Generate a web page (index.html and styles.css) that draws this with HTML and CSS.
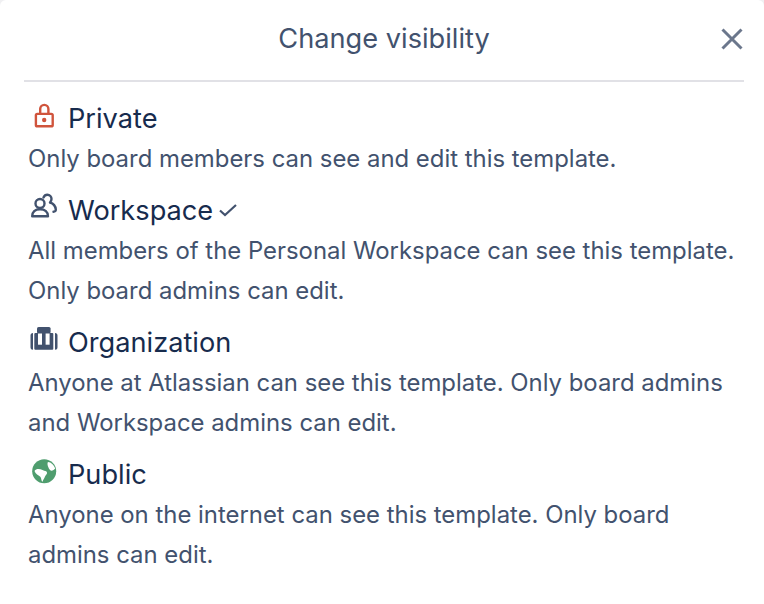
FILE: index.html
```html
<!DOCTYPE html>
<html lang="en">
<head>
<meta charset="utf-8">
<title>Change visibility</title>
<link rel="stylesheet" href="styles.css">
</head>
<body>
<div class="popover">
  <header class="header">
    <h1 class="title">Change visibility</h1>
    <svg class="close" width="24" height="24" viewBox="0 0 24 24"><path d="M2.500 2.500 21.500 21.500M21.500 2.500 2.500 21.500" fill="none" stroke="#6b778c" stroke-width="3"/></svg>
  </header>
  <ul class="options">
    <li class="option">
      <div class="name">
        <svg class="icon" width="30" height="30" viewBox="0 0 30 30"><path d="M12.200 12V8a4.100 4.100 0 0 1 8.200 0V12" fill="none" stroke="#d0543c" stroke-width="2.400"/><rect x="7.900" y="12.900" width="16.800" height="12.400" rx="1.400" fill="none" stroke="#d0543c" stroke-width="2.400"/><circle cx="16.200" cy="19" r="2.200" fill="#d0543c"/></svg>
        <span>Private</span>
      </div>
      <p class="desc">Only board members can see and edit this template.</p>
    </li>
    <li class="option">
      <div class="name">
        <svg class="icon" width="30" height="30" viewBox="0 2 30 30"><g fill="none" stroke="#42526e" stroke-width="2.400" stroke-linejoin="round" stroke-linecap="round"><circle cx="12" cy="12.500" r="4.500"/><path d="M4.200 25.200c0-4.200 2.800-7 7.800-7s8 2.800 8 7z"/><path d="M15.500 6.500c.8-1.800 2.200-2.700 3.800-2.700 2.500 0 4.200 1.900 4.200 4.200 0 1.500-.6 2.500-1.500 3.500 3 .8 5.500 3.400 5.800 7.200.1 1.300-.9 2-2.300 2"/></g></svg>
        <span>Workspace</span>
        <svg class="check" width="20" height="16" viewBox="0 0 20 16"><path d="M2 8.500 7 13 18 3" fill="none" stroke="#42526e" stroke-width="2.200"/></svg>
      </div>
      <p class="desc">All members of the Personal Workspace can see this template. Only board admins can edit.</p>
    </li>
    <li class="option">
      <div class="name">
        <svg class="icon" width="30" height="30" viewBox="0 1 30 30"><path d="M5 9v16.700a2.500 2.500 0 0 1-2.500-2.500V11.500A2.500 2.500 0 0 1 5 9zM27 9v16.700a2.500 2.500 0 0 0 2.500-2.500V11.500A2.500 2.500 0 0 0 27 9z" fill="#42526e"/><rect x="6.300" y="9" width="19" height="16.700" rx="1" fill="#42526e"/><rect x="9" y="3" width="13.600" height="6.500" rx="1.600" fill="#42526e"/><rect x="10" y="9.500" width="4" height="11.200" fill="#fff"/><rect x="17.600" y="9.500" width="4" height="11.200" fill="#fff"/></svg>
        <span>Organization</span>
      </div>
      <p class="desc">Anyone at Atlassian can see this template. Only board admins and Workspace admins can edit.</p>
    </li>
    <li class="option">
      <div class="name">
        <svg class="icon" width="30" height="30" viewBox="0 1 30 30"><circle cx="16.200" cy="15.300" r="12" fill="#4f9d6e"/><path d="M6.500 15c1.500-2.500 5-2.500 8-1 2.500 1.300 4 .8 4.500 2.500s-1.500 2.300-2 4-1.800 3-2.500 5.200c-1.200-.4-1-4-2.500-5.200s-4.500-2.500-5.500-5.500zM20 6c3 0 6 3 7.200 6.500-1.200 1.300-3.700 3.500-5.200 1.500-1.300-1.500-3.500-6-2-8z" fill="#fff"/></svg>
        <span>Public</span>
      </div>
      <p class="desc">Anyone on the internet can see this template. Only board admins can edit.</p>
    </li>
  </ul>
</div>
</body>
</html>
```
FILE: styles.css
```css
html, body {
  margin: 0;
  padding: 0;
  background: #f0f0f2;
}
.popover {
  width: 764px;
  height: 604px;
  box-sizing: border-box;
  padding: 0 20px 0 24px;
  background: #fff;
  border-radius: 6px 6px 0 0;
  font-family: Inter, "Liberation Sans", sans-serif;
  overflow: hidden;
}
.header {
  position: relative;
  height: 82px;
  box-sizing: border-box;
  border-bottom: 2px solid #e1e1e6;
  display: flex;
  justify-content: center;
  align-items: center;
  padding-bottom: 2px;
}
.title {
  margin: 0;
  font-size: 27.200px;
  font-weight: 400;
  line-height: 40px;
  color: #42526e;
}
.close {
  position: absolute;
  right: 0;
  top: 27px;
}
.options {
  list-style: none;
  margin: 0;
  padding: 16px 0 0 4px;
}
.option {
  margin-bottom: 11px;
}
.name {
  display: flex;
  align-items: center;
  height: 40px;
  font-size: 27.200px;
  color: #172b4d;
}
.icon {
  flex: none;
  margin: -4px 10px 0 0;
}
.check {
  margin: 0 0 0 5px;
}
.desc {
  margin: 1px 0 0;
  font-size: 23.900px;
  line-height: 40px;
  color: #42526e;
}
```
